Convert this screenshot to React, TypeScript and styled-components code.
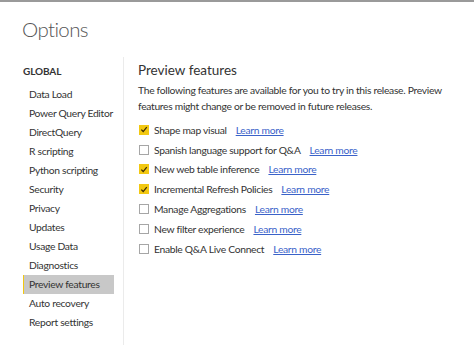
import styled, { createGlobalStyle } from 'styled-components';

interface NavItemProps {
  active?: boolean;
}
interface BoxProps {
  checked?: boolean;
}

const GlobalStyle = createGlobalStyle`
  html, body {
    margin: 0;
    padding: 0;
    background: #ffffff;
  }
  * {
    box-sizing: border-box;
  }
`;

const navItems = [
  'Data Load',
  'Power Query Editor',
  'DirectQuery',
  'R scripting',
  'Python scripting',
  'Security',
  'Privacy',
  'Updates',
  'Usage Data',
  'Diagnostics',
  'Preview features',
  'Auto recovery',
  'Report settings',
];

const features = [
  { label: 'Shape map visual', checked: true },
  { label: 'Spanish language support for Q&A', checked: false },
  { label: 'New web table inference', checked: true },
  { label: 'Incremental Refresh Policies', checked: true },
  { label: 'Manage Aggregations', checked: false },
  { label: 'New filter experience', checked: false },
  { label: 'Enable Q&A Live Connect', checked: false },
];

const App = () => {
  return (
    <Page>
      <GlobalStyle />
      <Title>Options</Title>
      <Body>
        <Sidebar>
          <SectionLabel>GLOBAL</SectionLabel>
          <NavList>
            {navItems.map((item) => (
              <NavItem key={item} active={item === 'Preview features'}>
                {item}
              </NavItem>
            ))}
          </NavList>
        </Sidebar>
        <Content>
          <Heading>Preview features</Heading>
          <Description>
            The following features are available for you to try in this release. Preview
            features might change or be removed in future releases.
          </Description>
          <FeatureList>
            {features.map((f) => (
              <FeatureRow key={f.label}>
                <Box checked={f.checked}>
                  {f.checked && (
                    <svg width="9" height="9" viewBox="0 0 9 9">
                      <path
                        d="M1.5 4.6 L3.6 6.8 L7.6 1.8"
                        fill="none"
                        stroke="#3b2a05"
                        strokeWidth="1.4"
                      />
                    </svg>
                  )}
                </Box>
                <FeatureLabel>{f.label}</FeatureLabel>
                <LearnMore href="#">Learn more</LearnMore>
              </FeatureRow>
            ))}
          </FeatureList>
        </Content>
      </Body>
    </Page>
  );
};

export default App;

const Page = styled.div`
  width: 474px;
  height: 345px;
  overflow: hidden;
  border-top: 2px solid #9a9a9a;
  font-family: Lato, 'Open Sans', sans-serif;
  color: #333333;
`;

const Title = styled.h1`
  margin: 0;
  padding: 13px 0 0 22px;
  height: 55px;
  font-size: 20.5px;
  font-weight: 300;
  letter-spacing: -0.6px;
  line-height: 28px;
  color: #555555;
`;

const Body = styled.div`
  display: flex;
  height: 288px;
`;

const Sidebar = styled.nav`
  width: 124px;
  padding: 6px 9px 0 23px;
  border-right: 1px solid #ebebeb;
`;

const SectionLabel = styled.div`
  font-size: 10px;
  font-weight: 700;
  letter-spacing: -0.1px;
  line-height: 16px;
  color: #333333;
  margin-bottom: 6px;
`;

const NavList = styled.div`
  display: flex;
  flex-direction: column;
`;

const NavItem = styled.div<NavItemProps>`
  height: 19px;
  line-height: 19px;
  padding-left: 5px;
  font-size: 10.3px;
  letter-spacing: -0.3px;
  white-space: nowrap;
  color: #333333;
  border-left: 1px solid ${({ active }) => (active ? '#f2c811' : 'transparent')};
  background: ${({ active }) => (active ? '#c8c8c8' : 'transparent')};
`;

const Content = styled.section`
  flex: 1;
  padding: 3px 0 0 14px;
`;

const Heading = styled.h2`
  margin: 0;
  font-size: 13.5px;
  font-weight: 400;
  line-height: 20px;
  color: #333333;
`;

const Description = styled.p`
  margin: 2px 0 0 0;
  width: 320px;
  font-size: 10.3px;
  letter-spacing: -0.3px;
  line-height: 16px;
  color: #333333;
`;

const FeatureList = styled.div`
  display: flex;
  flex-direction: column;
  margin-top: 6px;
`;

const FeatureRow = styled.div`
  display: flex;
  align-items: center;
  height: 19.8px;
  gap: 5px;
  font-size: 10.3px;
  letter-spacing: -0.3px;
  white-space: nowrap;
`;

const Box = styled.span<BoxProps>`
  display: flex;
  align-items: center;
  justify-content: center;
  width: 10px;
  height: 10px;
  margin-left: 1px;
  background: ${({ checked }) => (checked ? '#f2c811' : '#ffffff')};
  border: 1px solid ${({ checked }) => (checked ? '#f2c811' : '#a6a6a6')};
`;

const FeatureLabel = styled.span`
  color: #333333;
  margin-right: 4px;
`;

const LearnMore = styled.a`
  color: #3a62c9;
  text-decoration: underline;
`;
